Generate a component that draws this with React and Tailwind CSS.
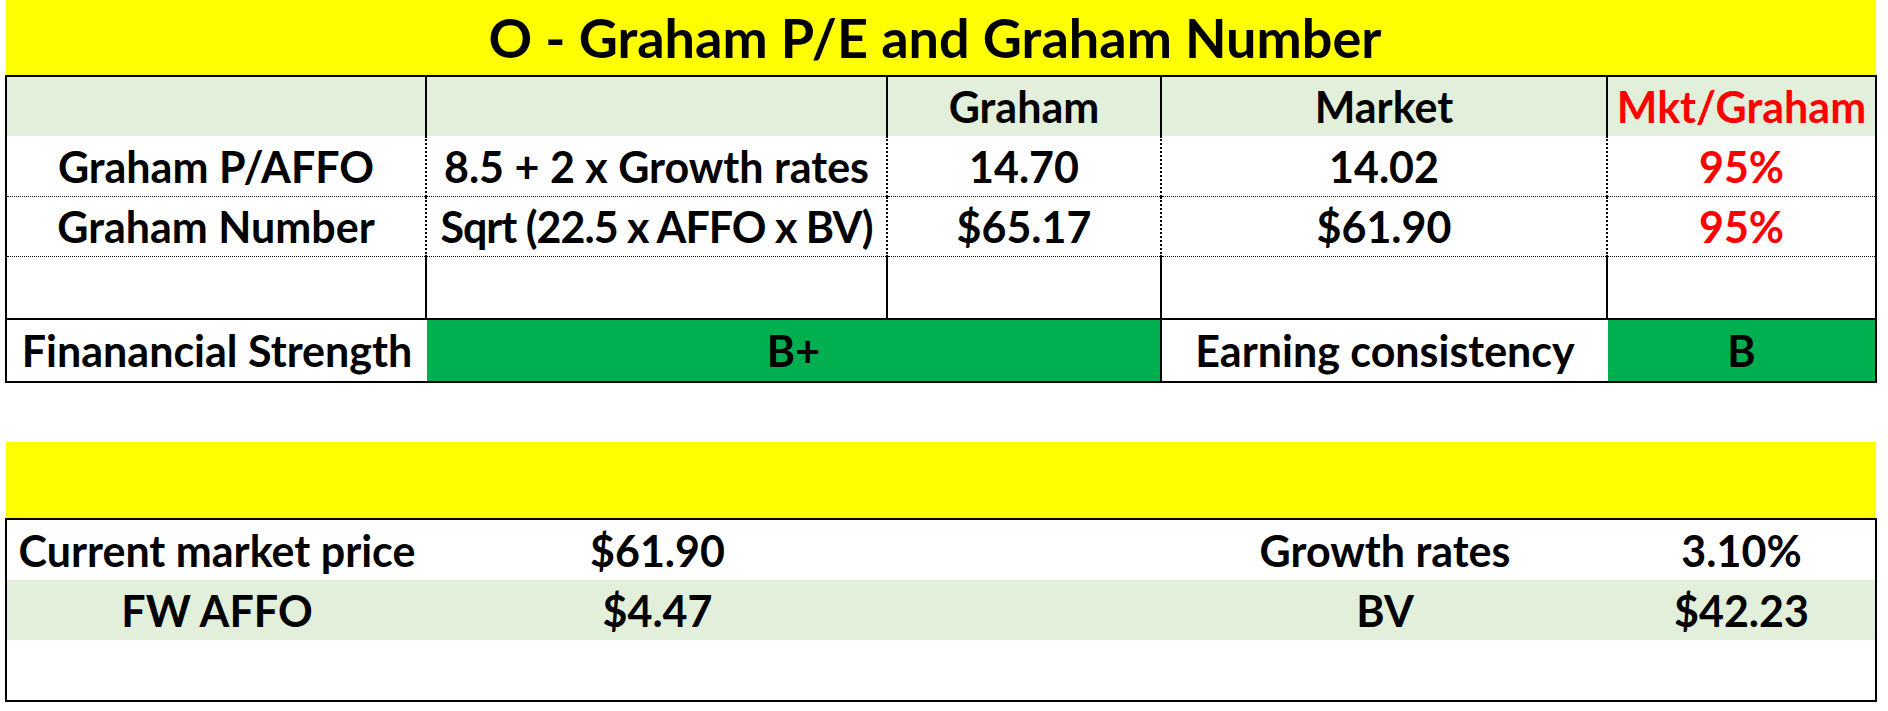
import React from "react";

const GRID = "grid grid-cols-[420px_461px_274px_446px_267px]";
const CELL = "flex items-center justify-center whitespace-nowrap";

function Row({ cells, className = "", cellClass = "" }) {
  return (
    <div className={`${GRID} ${className}`}>
      {cells.map((c, i) => (
        <div
          key={i}
          className={`${CELL} ${cellClass} ${i < 4 ? "border-r-2 border-r-black" : ""} ${c.cls || ""}`}
        >
          {c.t}
        </div>
      ))}
    </div>
  );
}

export default function App() {
  return (
    <div className="w-[1888px] h-[711px] bg-white font-['Lato',sans-serif] font-bold text-black text-[43px] leading-none">
      {/* Title bar */}
      <div className="ml-[6px] w-[1870px] h-[75px] bg-[#FFFF00] flex items-center justify-center pr-[12px] text-[54px]">
        O - Graham P/E and Graham Number
      </div>

      {/* Top table */}
      <div className="ml-[5px] w-[1872px] border-2 border-black">
        <Row
          className="h-[59px] bg-[#E2EFDA]"
          cells={[{ t: "" }, { t: "" }, { t: "Graham" }, { t: "Market" }, { t: "Mkt/Graham", cls: "text-[#FF0000]" }]}
        />
        <Row
          className="h-[61px]"
          cellClass="border-b border-dotted border-b-black"
          cells={[
            { t: "Graham P/AFFO" },
            { t: "8.5 + 2 x Growth rates" },
            { t: "14.70" },
            { t: "14.02" },
            { t: "95%", cls: "text-[#FF0000]" },
          ]}
        />
        <Row
          className="h-[60px]"
          cellClass="border-b border-dotted border-b-black"
          cells={[
            { t: "Graham Number" },
            { t: "Sqrt (22.5 x AFFO x BV)", cls: "tracking-[-1px]" },
            { t: "$65.17" },
            { t: "$61.90" },
            { t: "95%", cls: "text-[#FF0000]" },
          ]}
        />
        <Row className="h-[61px]" cells={[{ t: "" }, { t: "" }, { t: "" }, { t: "" }, { t: "" }]} />
        <div className={`${GRID} h-[63px] border-t-2 border-black`}>
          <div className={CELL}>Finanancial Strength</div>
          <div className={`${CELL} col-span-2 bg-[#00B050] border-r-2 border-r-black`}>B+</div>
          <div className={CELL}>Earning consistency</div>
          <div className={`${CELL} bg-[#00B050]`}>B</div>
        </div>
      </div>

      {/* Bottom section */}
      <div className="ml-[6px] mt-[59px] w-[1870px] h-[76px] bg-[#FFFF00]" />
      <div className="ml-[5px] w-[1872px] border-2 border-black">
        <div className={`${GRID} h-[60px]`}>
          <div className={CELL}>Current market price</div>
          <div className={CELL}>$61.90</div>
          <div />
          <div className={CELL}>Growth rates</div>
          <div className={CELL}>3.10%</div>
        </div>
        <div className={`${GRID} h-[60px] bg-[#E2EFDA]`}>
          <div className={CELL}>FW AFFO</div>
          <div className={CELL}>$4.47</div>
          <div />
          <div className={CELL}>BV</div>
          <div className={CELL}>$42.23</div>
        </div>
        <div className="h-[60px]" />
      </div>
    </div>
  );
}
